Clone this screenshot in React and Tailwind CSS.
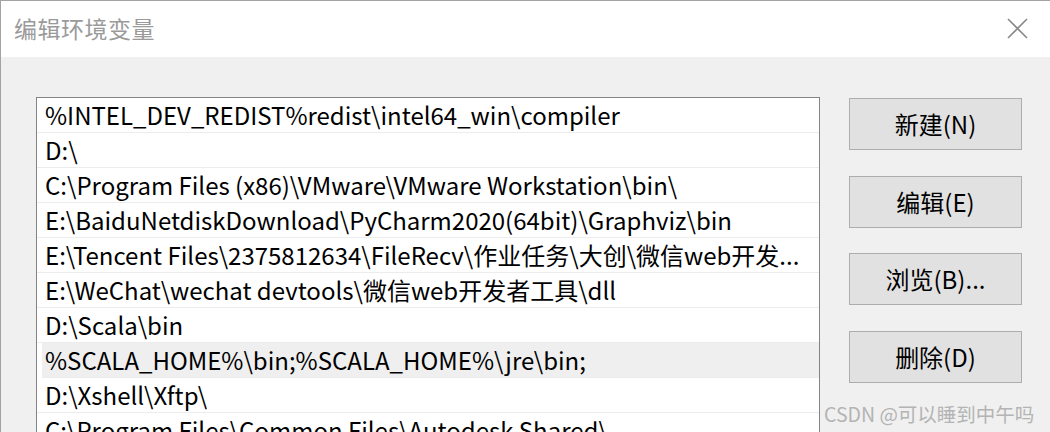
import React from "react";

const paths = [
  "%INTEL_DEV_REDIST%redist\\intel64_win\\compiler",
  "D:\\",
  "C:\\Program Files (x86)\\VMware\\VMware Workstation\\bin\\",
  "E:\\BaiduNetdiskDownload\\PyCharm2020(64bit)\\Graphviz\\bin",
  "E:\\Tencent Files\\2375812634\\FileRecv\\作业任务\\大创\\微信web开发...",
  "E:\\WeChat\\wechat devtools\\微信web开发者工具\\dll",
  "D:\\Scala\\bin",
  "%SCALA_HOME%\\bin;%SCALA_HOME%\\jre\\bin;",
  "D:\\Xshell\\Xftp\\",
  "C:\\Program Files\\Common Files\\Autodesk Shared\\",
];

const buttons = ["新建(N)", "编辑(E)", "浏览(B)...", "删除(D)"];

const uiFont = {
  fontFamily: '"Noto Sans CJK SC", "Noto Sans", sans-serif',
};

export default function App() {
  return (
    <div
      className="relative w-[1050px] h-[432px] overflow-hidden bg-[#f0f0f0] border-t border-l border-[#a3a3a3]"
      style={uiFont}
    >
      {/* title bar */}
      <div className="h-[56px] bg-white flex items-center justify-between pl-[13px] pr-[22px]">
        <span className="text-[23px] text-[#9a9a9a] tracking-[0.5px] -mt-[2px]">
          编辑环境变量
        </span>
        <svg width="21" height="21" viewBox="0 0 21 21" className="-mt-[1px]">
          <path d="M1 1 L20 20 M20 1 L1 20" stroke="#8a8a8a" strokeWidth="1.6" fill="none" />
        </svg>
      </div>

      {/* body */}
      <div className="flex items-start pt-[40px] pl-[35px]">
        {/* path list */}
        <div className="w-[784px] h-[340px] bg-white border border-[#848484] overflow-hidden">
          {paths.map((p, i) => (
            <div
              key={i}
              className={
                "h-[35px] flex items-center border-b border-[#ececec] whitespace-nowrap overflow-hidden " +
                (i === 7 ? "bg-[#efefef] ml-[5px] pl-[3px]" : "pl-[8px]")
              }
            >
              <span className="text-[24px] text-black leading-none">{p}</span>
            </div>
          ))}
        </div>

        {/* action buttons */}
        <div className="ml-[29px] mt-[1px] flex flex-col gap-[25.5px]">
          {buttons.map((b) => (
            <div
              key={b}
              className="w-[173px] h-[52px] flex items-center justify-center bg-[#e1e1e1] border border-[#adadad] text-[24px] text-black"
            >
              {b}
            </div>
          ))}
        </div>
      </div>

      {/* watermark */}
      <div className="absolute left-[823px] top-[398px] text-[19.5px] text-[#b4b4b4] whitespace-nowrap">
        CSDN @可以睡到中午吗
      </div>
    </div>
  );
}
